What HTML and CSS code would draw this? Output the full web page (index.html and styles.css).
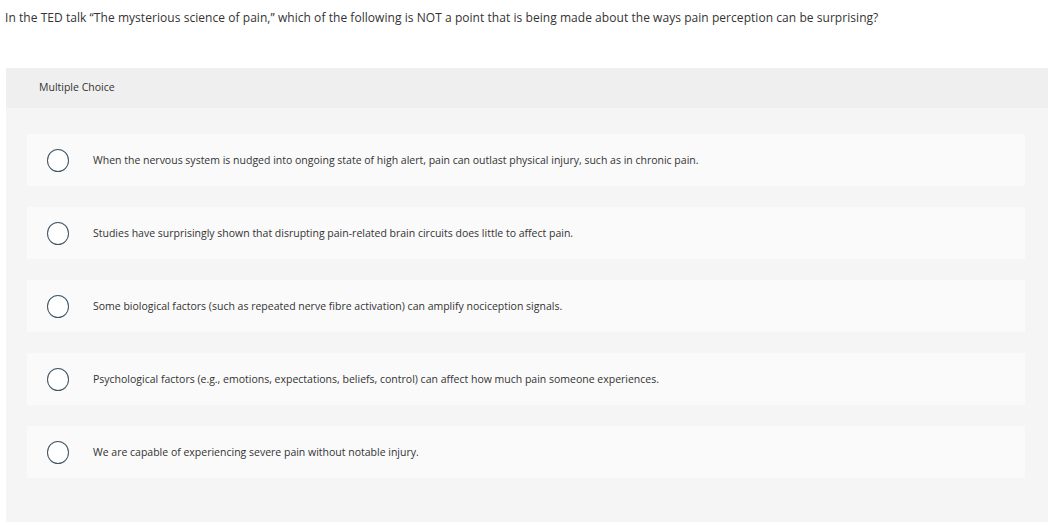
FILE: index.html
```html
<!DOCTYPE html>
<html>
<head>
<meta charset="utf-8">
<link rel="stylesheet" href="styles.css">
</head>
<body>
<p class="question">In the TED talk “The mysterious science of pain,” which of the following is NOT a point that is being made about the ways pain perception can be surprising?</p>
<div class="panel">
  <div class="panel-head">Multiple Choice</div>
  <div class="options">
    <div class="option"><span class="radio"></span><span class="label">When the nervous system is nudged into ongoing state of high alert, pain can outlast physical injury, such as in chronic pain.</span></div>
    <div class="option"><span class="radio"></span><span class="label">Studies have surprisingly shown that disrupting pain-related brain circuits does little to affect pain.</span></div>
    <div class="option"><span class="radio"></span><span class="label">Some biological factors (such as repeated nerve fibre activation) can amplify nociception signals.</span></div>
    <div class="option"><span class="radio"></span><span class="label">Psychological factors (e.g., emotions, expectations, beliefs, control) can affect how much pain someone experiences.</span></div>
    <div class="option"><span class="radio"></span><span class="label">We are capable of experiencing severe pain without notable injury.</span></div>
  </div>
</div>
</body>
</html>
```
FILE: styles.css
```css
html, body {
  margin: 0;
  padding: 0;
  background: #ffffff;
}
body {
  font-family: "Open Sans", "Liberation Sans", sans-serif;
  color: #333333;
  width: 1055px;
  height: 525px;
  overflow: hidden;
}
.question {
  margin: 0;
  padding: 10px 0 0 5px;
  height: 68px;
  box-sizing: border-box;
  font-size: 12px;
  line-height: 16px;
  letter-spacing: 0.05px;
}
.panel {
  margin-left: 6px;
  width: 1042px;
  height: 454px;
  background: #f5f5f5;
}
.panel-head {
  height: 40px;
  background: #efefef;
  box-sizing: border-box;
  padding: 12px 0 0 33px;
  font-size: 10.5px;
  line-height: 14px;
}
.options {
  display: flex;
  flex-direction: column;
  gap: 21px;
  padding: 26px 0 0 21px;
}
.option {
  width: 998px;
  height: 52px;
  background: #fafafa;
  display: flex;
  align-items: center;
  box-sizing: border-box;
  padding-left: 20px;
}
.radio {
  width: 22px;
  height: 23px;
  border: 1.3px solid #3d5566;
  border-radius: 50%;
  box-sizing: border-box;
  flex: none;
  background: #ffffff;
}
.label {
  margin-left: 24px;
  font-size: 10.5px;
  line-height: 14px;
}
```
